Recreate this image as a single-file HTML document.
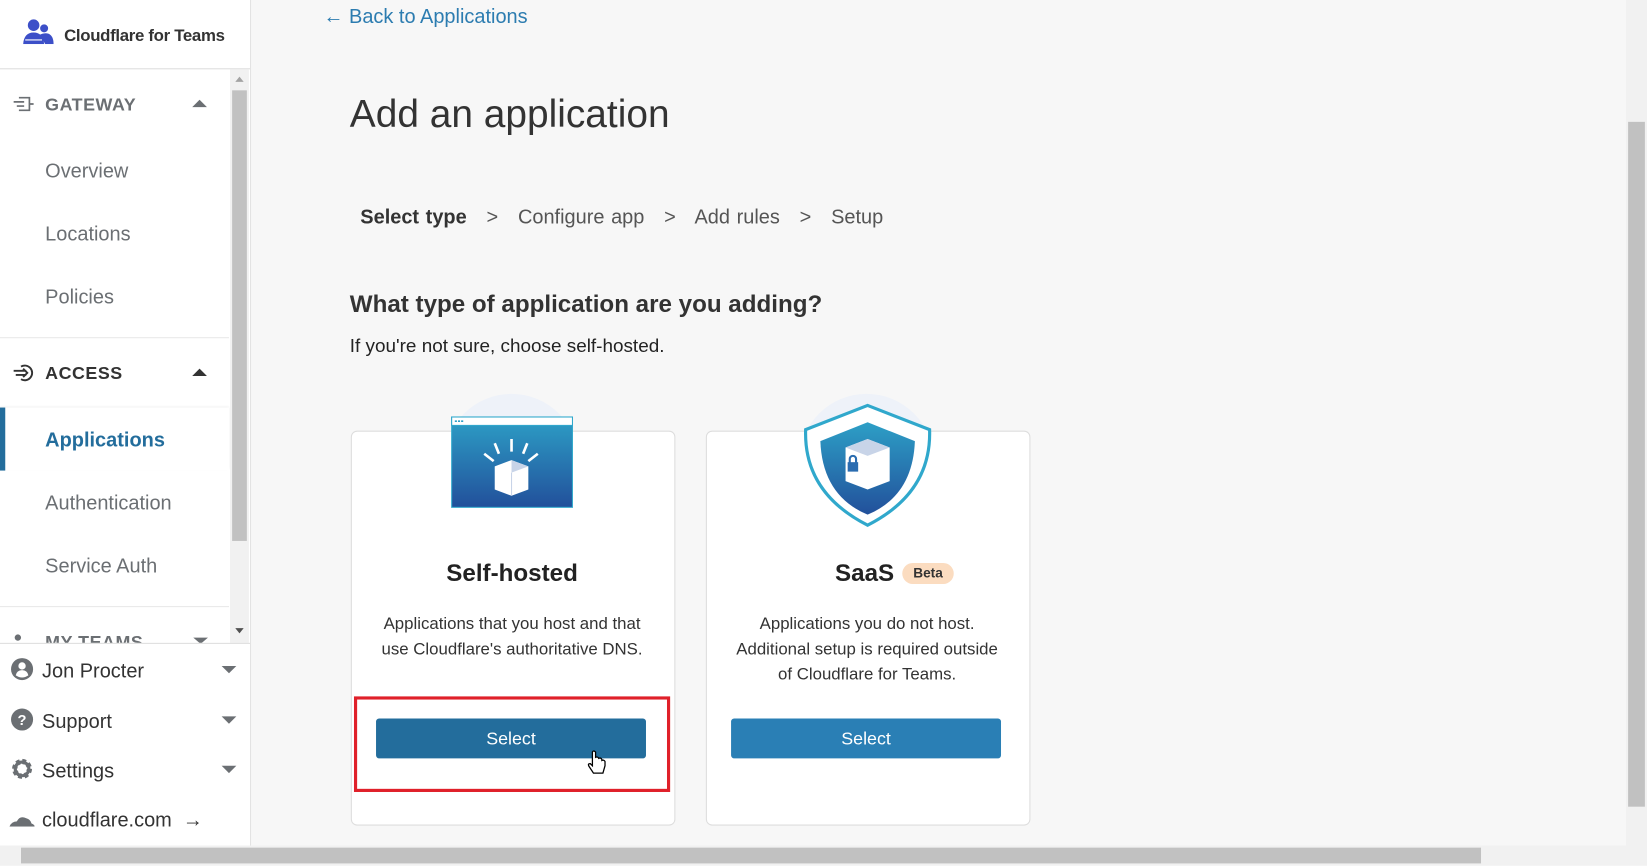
<!DOCTYPE html>
<html><head><meta charset="utf-8"><style>
html,body{margin:0;padding:0;width:1647px;height:865px;overflow:hidden;background:#f7f7f7}
#w{position:absolute;left:0;top:0;width:1568px;height:824px;transform:scale(1.05038);transform-origin:0 0;font-family:"Liberation Sans",sans-serif;background:#f7f7f7}
.a{position:absolute;white-space:nowrap}
.side{position:absolute;left:0;top:0;width:238px;height:805px;background:#fff;border-right:1px solid #e3e3e3}
.it{position:absolute;left:43px;font-size:19px;color:#6b6f73;line-height:1}
.hd{position:absolute;left:43px;font-size:17px;font-weight:bold;letter-spacing:.5px;line-height:1}
.tri{position:absolute;width:0;height:0;border-left:7px solid transparent;border-right:7px solid transparent}
.bot{position:absolute;left:40px;font-size:19px;color:#333;line-height:1}
.card{position:absolute;top:410px;width:307px;height:374px;background:#fff;border:1px solid #ddd;border-radius:6px}
.circ{position:absolute;top:375px;width:128px;height:128px;border-radius:50%;background:#eef2f9}
.btn{position:absolute;top:684px;width:257px;height:38px;border-radius:3px;color:#fff;font-size:17px;text-align:center;line-height:40px}
.desc{position:absolute;width:307px;text-align:center;font-size:16px;color:#333;line-height:24px;font-family:"Liberation Sans",Arial,sans-serif}
</style></head><body><div id="w">
<div class="side">
 <svg class="a" style="left:22px;top:18px" width="30" height="24" viewBox="0 0 30 24"><circle cx="10" cy="6" r="5.5" fill="#3c4fc8"/><circle cx="20" cy="9" r="3.8" fill="#3c4fc8"/><path d="M0 24 Q1 13 10 13 Q19 13 20 24Z" fill="#3c4fc8"/><path d="M16 15 Q20 13 24 14 Q29 16 29 24 L21 24Z" fill="#3c4fc8"/><path d="M2 20 H18" stroke="#fff" stroke-width="1"/></svg>
 <div class="a" style="left:61px;top:26px;font-size:16px;font-weight:bold;color:#333;letter-spacing:-.3px">Cloudflare for Teams</div>
 <div class="a" style="left:0;top:65px;width:238px;height:1px;background:#ddd"></div>
 <div class="a" style="left:219px;top:66px;width:18px;height:546px;background:#f1f1f1"></div>
 <div class="a" style="left:221px;top:86px;width:14px;height:429px;background:#c1c1c1"></div>
 <div class="tri" style="left:224px;top:73px;border-width:0 4px 5px;border-bottom:5px solid #a3a3a3;border-left:4px solid transparent;border-right:4px solid transparent"></div>
 <div class="tri" style="left:224px;top:598px;border-top:5px solid #505050;border-left:4px solid transparent;border-right:4px solid transparent"></div>
 <svg class="a" style="left:11px;top:91px" width="22" height="16" viewBox="0 0 22 16" fill="none" stroke="#6b6f73" stroke-width="1.6"><path d="M7 2H17V14H7M2 6H12M5 10H12M17 8H21"/></svg>
 <div class="hd" style="top:91px;color:#6b6f73">GATEWAY</div>
 <div class="tri" style="left:183px;top:95px;border-bottom:7px solid #6b6f73"></div>
 <div class="it" style="top:154px">Overview</div>
 <div class="it" style="top:214px">Locations</div>
 <div class="it" style="top:274px">Policies</div>
 <div class="a" style="left:0;top:321px;width:218px;height:1px;background:#e8e8e8"></div>
 <svg class="a" style="left:12px;top:346px" width="22" height="18" viewBox="0 0 22 18" fill="none" stroke="#333" stroke-width="1.8"><path d="M8 3A7 7 0 1 1 8 15M1 7H13M3 11H13M10 5L14 9L10 13"/></svg>
 <div class="hd" style="top:347px;color:#333">ACCESS</div>
 <div class="tri" style="left:183px;top:351px;border-bottom:7px solid #333"></div>
 <div class="a" style="left:0;top:388px;width:218px;height:60px;background:#fff;box-shadow:0 -1px 2px #f0f0f0"></div>
 <div class="a" style="left:0;top:388px;width:5px;height:60px;background:#236d9c"></div>
 <div class="it" style="top:410px;color:#236d9c;font-weight:bold">Applications</div>
 <div class="it" style="top:470px">Authentication</div>
 <div class="it" style="top:530px">Service Auth</div>
 <div class="a" style="left:0;top:577px;width:218px;height:1px;background:#e8e8e8"></div>
 <div class="a" style="left:0;top:595px;width:218px;height:17px;overflow:hidden"><div class="hd" style="top:8px;color:#6b6f73">MY TEAMS</div><div class="a" style="left:14px;top:9px;width:6px;height:6px;border-radius:50%;background:#6b6f73"></div><div class="tri" style="left:184px;top:12px;border-top:6px solid #6b6f73"></div></div>
 <div class="a" style="left:0;top:612px;width:238px;height:1px;background:#ddd"></div>
 <svg class="a" style="left:10px;top:626px" width="22" height="22" viewBox="0 0 22 22"><circle cx="11" cy="11" r="10.5" fill="#6b6f73"/><circle cx="11" cy="8" r="3.5" fill="#fff"/><path d="M5 17Q6 12 11 12Q16 12 17 17Q11 21 5 17Z" fill="#fff"/></svg>
 <div class="bot" style="top:630px">Jon Procter</div>
 <div class="tri" style="left:211px;top:634px;border-top:7px solid #6b6f73"></div>
 <svg class="a" style="left:10px;top:674px" width="22" height="22" viewBox="0 0 22 22"><circle cx="11" cy="11" r="10.5" fill="#6b6f73"/><text x="11" y="16" font-size="14" font-weight="bold" text-anchor="middle" fill="#fff" font-family="Liberation Sans">?</text></svg>
 <div class="bot" style="top:678px">Support</div>
 <div class="tri" style="left:211px;top:682px;border-top:7px solid #6b6f73"></div>
 <svg class="a" style="left:10px;top:721px" width="22" height="22" viewBox="0 0 22 22"><circle cx="11" cy="11" r="7" fill="none" stroke="#6b6f73" stroke-width="5" stroke-dasharray="3.2 2.3"/><circle cx="11" cy="11" r="6.5" fill="none" stroke="#6b6f73" stroke-width="3"/></svg>
 <div class="bot" style="top:725px">Settings</div>
 <div class="tri" style="left:211px;top:729px;border-top:7px solid #6b6f73"></div>
 <svg class="a" style="left:9px;top:775px" width="24" height="12" viewBox="0 0 24 12"><path d="M0 12Q2 7 7 7Q10 1 16 4Q20 5 21 9Q24 10 24 12Z" fill="#6b6f73"/></svg>
 <div class="bot" style="top:772px">cloudflare.com &nbsp;→</div>
</div>
<div class="a" style="left:308px;top:6px;font-size:19px;color:#2c7cb0">← Back to Applications</div>
<div class="a" style="left:333px;top:88px;font-size:37px;color:#333;font-weight:300">Add an application</div>
<div class="a" style="left:343px;top:197px;font-size:19px;color:#555;word-spacing:1px"><b style="color:#333">Select type</b> &nbsp;&nbsp;&gt;&nbsp;&nbsp; Configure app &nbsp;&nbsp;&gt;&nbsp;&nbsp; Add rules &nbsp;&nbsp;&gt;&nbsp;&nbsp; Setup</div>
<div class="a" style="left:333px;top:276px;font-size:23px;font-weight:bold;color:#333">What type of application are you adding?</div>
<div class="a" style="left:333px;top:319px;font-size:18px;color:#222">If you're not sure, choose self-hosted.</div>
<div class="circ" style="left:423px"></div>
<div class="circ" style="left:761px"></div>
<div class="card" style="left:334px"></div>
<div class="card" style="left:672px"></div>
<svg class="a" style="left:429px;top:396px" width="117" height="88" viewBox="0 0 117 88"><defs><linearGradient id="g" x1="0" y1="0" x2="0" y2="1"><stop offset="0" stop-color="#2d9fc6"/><stop offset="1" stop-color="#22509b"/></linearGradient></defs><rect x="1" y="1" width="115" height="86" fill="url(#g)" stroke="#30a8cc"/><rect x="1" y="1" width="115" height="8" fill="#fff" stroke="#30a8cc"/><path d="M4 5h2M7 5h2M10 5h2" stroke="#2d9fc6" stroke-width="1.5"/><path d="M32 36l9 7M42 26l4 10M58 22v12M73 26l-4 10M83 36l-9 7" stroke="#fff" stroke-width="2.5"/><path d="M42 48l16-6 16 6v22l-16 6-16-6z" fill="#fff"/><path d="M58 42l16 6-16 6z" fill="#c8d4e8"/><path d="M58 54v22" stroke="#c8d4e8"/></svg>
<svg class="a" style="left:765px;top:384px" width="122" height="118" viewBox="0 0 122 118"><defs><linearGradient id="h" x1="0" y1="0" x2="0" y2="1"><stop offset="0" stop-color="#2d9fc6"/><stop offset="1" stop-color="#22509b"/></linearGradient></defs><path d="M61 2L120 25Q122 85 61 116Q0 85 2 25Z" fill="#fff" stroke="#30a8cc" stroke-width="3"/><path d="M61 18L106 36Q104 88 61 106Q18 88 16 36Z" fill="url(#h)"/><path d="M40 42L61 34L82 42V74L61 82L40 74Z" fill="#fff"/><path d="M40 42L61 34L82 42L61 50Z" fill="#c8d4e8"/><rect x="42" y="56" width="10" height="9" fill="#2a6cb0"/><path d="M44 57v-4a3 3 0 0 1 6 0v4" fill="none" stroke="#2a6cb0" stroke-width="2"/></svg>
<div class="a" style="left:334px;top:532px;width:307px;text-align:center;font-size:23px;font-weight:bold;color:#222">Self-hosted</div>
<div class="a" style="left:795px;top:532px;font-size:23px;font-weight:bold;color:#222">SaaS</div>
<div class="a" style="left:859px;top:536px;width:49px;height:20px;border-radius:10px;background:#fbdcc0;font-size:13px;font-weight:bold;color:#333;text-align:center;line-height:20px">Beta</div>
<div class="desc" style="left:334px;top:583px">Applications that you host and that<br>use Cloudflare's authoritative DNS.</div>
<div class="desc" style="left:672px;top:583px">Applications you do not host.<br>Additional setup is required outside<br>of Cloudflare for Teams.</div>
<div class="a" style="left:337px;top:663px;width:295px;height:85px;border:3px solid #e0202a"></div>
<div class="btn" style="left:358px;background:#236d9c">Select</div>
<div class="btn" style="left:696px;background:#2a7fb5">Select</div>
<svg class="a" style="left:559px;top:714px" width="18" height="26" viewBox="0 0 18 26"><path d="M5 2v13l-2-2q-3 0-1 3l4 6h9l2-7v-4q-1-2-3-1v-1q-1-2-3-1q-1-2-3-1V2q-2-2-3 0Z" fill="#fff" stroke="#000" stroke-width="1.2"/></svg>
<div class="a" style="left:1548px;top:0;width:20px;height:805px;background:#f1f1f1"></div>
<div class="a" style="left:1550px;top:116px;width:16px;height:652px;background:#c1c1c1"></div>
<div class="a" style="left:0;top:805px;width:1568px;height:19px;background:#f1f1f1"></div>
<div class="a" style="left:20px;top:807px;width:1390px;height:15px;background:#c1c1c1"></div>
</div></body></html>
